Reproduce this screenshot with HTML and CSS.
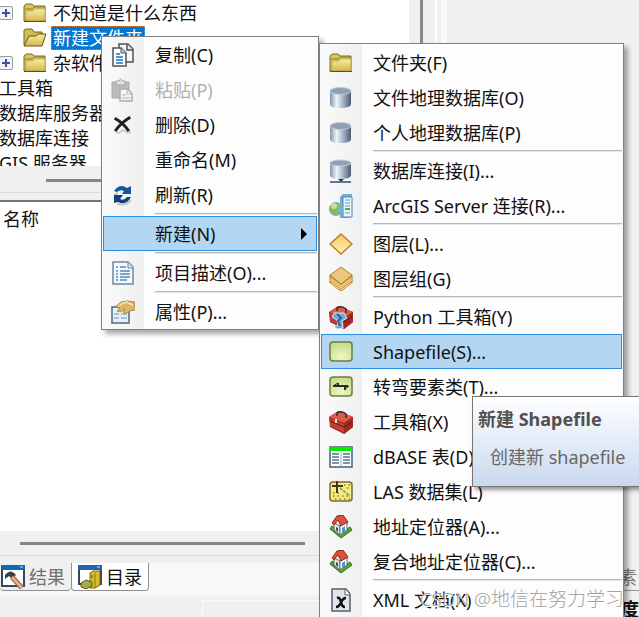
FILE: index.html
```html
<!DOCTYPE html>
<html lang="zh-CN">
<head>
    <meta charset="UTF-8">
    <meta name="viewport" content="width=device-width, initial-scale=1.0">
    <title>目录</title>
    <link rel="stylesheet" href="styles.css">
</head>
<body>
    <!-- 图标定义 -->
    <svg class="defs" width="0" height="0">
        <defs>
            <linearGradient id="g-yellow" x1="0" y1="0" x2="0" y2="1"><stop offset="0" stop-color="#f6eea0"/><stop offset="1" stop-color="#d3b84e"/></linearGradient>
            <linearGradient id="g-steel"><stop offset="0" stop-color="#8295ab"/><stop offset=".32" stop-color="#f0f5fb"/><stop offset=".6" stop-color="#a9bad0"/><stop offset="1" stop-color="#4d5c70"/></linearGradient>
            <linearGradient id="g-gold" x1="0" y1="0" x2="0" y2="1"><stop offset="0" stop-color="#f6c765"/><stop offset="1" stop-color="#fff3b0"/></linearGradient>
            <radialGradient id="g-green" cx=".5" cy=".8" r=".8"><stop offset="0" stop-color="#eef8c4"/><stop offset="1" stop-color="#c6d98a"/></radialGradient>
            <symbol id="folder" viewBox="0 0 24 24">
                <path d="M1 20V5l2-2h6l2 2h11v15z" fill="#d9c65c" stroke="#7c6a24"/>
                <path d="M2 8h7l2-2h11" fill="none" stroke="#8d7b30"/>
                <path d="M3 10h7l2-2h10v12H3z" fill="url(#g-yellow)" stroke="#a28f3c" stroke-width=".5"/>
                <path d="M1 20.500h22" stroke="#5d4f18"/>
            </symbol>
            <symbol id="folder-open" viewBox="0 0 24 24">
                <path d="M1 19V4l2-1h6l2 3h8v4" fill="#d2bc55" stroke="#75641e"/>
                <path d="M1 20L6 10h7l2-2h8l-4 12z" fill="url(#g-yellow)" stroke="#64551a"/>
            </symbol>
            <symbol id="copy" viewBox="0 0 24 24">
                <path d="M8 1h9l5 5v13H8z" fill="#f4f6f8" stroke="#4e545b" stroke-width="1.500"/>
                <path d="M16 1v6h6" fill="#dfe4e9" stroke="#4e545b" stroke-width="1.500"/>
                <path d="M2 5h8l5 5v13H2z" fill="#fff" stroke="#4e545b" stroke-width="1.500"/>
                <path d="M10 5v5h5" fill="#c4cbd2" stroke="#4e545b"/>
                <path d="M5 11h4M5 14h7M5 17h7M5 20h7" stroke="#4f97d2" stroke-width="2"/>
            </symbol>
            <symbol id="paste" viewBox="0 0 24 24">
                <path d="M1 4h17v16H1z" fill="#bcbcbc" stroke="#a9a9a9"/>
                <path d="M5 7V3h3q1.500-4 3 0h3v4z" fill="#e2e2e2" stroke="#a5a5a5"/>
                <path d="M9 11h8l4 5v7H9z" fill="#f5f5f5" stroke="#acacac" stroke-width="1.500"/>
                <path d="M16 11v5h5M11 17h4M11 20h8" fill="none" stroke="#b2b2b2"/>
            </symbol>
            <symbol id="delete" viewBox="0 0 24 24">
                <path d="M5 19l3 1 4-3 5 3 3-1" stroke="#ccc" stroke-width="2" fill="none"/>
                <path d="M5 6q7 4 12 11M18 5Q10 10 5 17" stroke="#202020" stroke-width="3" stroke-linecap="square" fill="none"/>
            </symbol>
            <symbol id="refresh" viewBox="0 0 24 24">
                <path d="M6 21q9 2 14-4M3 12l4-2" stroke="#c9c9c9" stroke-width="2" fill="none"/>
                <path d="M3 8q6-8 13-3l4-2v8h-9l2-3q-4-2-7 1z" fill="#15589a"/>
                <path d="M20 14q-5 9-13 5l-4 1v-8h9l-3 4q4 2 7-2z" fill="#10427a"/>
            </symbol>
            <symbol id="doc" viewBox="0 0 24 24">
                <path d="M2 1h15l5 5v17H2z" fill="#f5f9fd" stroke="#71879b" stroke-width="1.500"/>
                <path d="M17 1v6h5" fill="#dce5ee" stroke="#71879b"/>
                <path d="M5 6h2M9 6h6M5 10h2M9 10h10M5 13h2M9 13h10M5 16h2M9 16h10M5 19h2M9 19h7" stroke="#4f8dbc" stroke-width="1.500"/>
            </symbol>
            <symbol id="props" viewBox="0 0 24 24">
                <path d="M1 7h17v16H1z" fill="#e7f0f8" stroke="#51687d" stroke-width="1.500"/>
                <path d="M3 14h5M3 18h5M10 14h6M10 18h6" stroke="#a5c5dd" stroke-width="2"/>
                <path d="M4 7l6-5 6-1 8 1v8l-5 1-5 3-2-2 2-3-5 3-3-1 3-3z" fill="#dcb667" stroke="#91712e" stroke-width=".7"/>
                <path d="M8 6l4-3 5-1M17 3l5 2" stroke="#f9e6a8" stroke-width="1.500" fill="none"/>
            </symbol>
            <symbol id="db" viewBox="0 0 24 24">
                <path d="M1 5v13q0 4 10.500 4T22 18V5z" fill="url(#g-steel)"/>
                <ellipse cx="11.500" cy="5" rx="10.500" ry="3.500" fill="#8fa0b4" stroke="#c0cad6"/>
            </symbol>
            <symbol id="db-link" viewBox="0 0 24 24">
                <path d="M1 4v12q0 4 10.500 4T22 16V4z" fill="url(#g-steel)"/>
                <ellipse cx="11.500" cy="4" rx="10.500" ry="3" fill="#8fa0b4" stroke="#c0cad6"/>
                <path d="M1 23h21" stroke="#5d7898" stroke-width="2"/><path d="M9 20h6l-3 3z" fill="#263c59"/>
            </symbol>
            <symbol id="server" viewBox="0 0 24 24">
                <path d="M11 3l3-3h9v21l-3 3h-9z" fill="#75acd6"/>
                <path d="M14 3h9v20h-9z" fill="#edf6fd" stroke="#4c83b2"/>
                <path d="M16 6h5M16 9h5M16 12h5M16 19h5" stroke="#6599c1"/><path d="M16 15h5" stroke="#38b54a" stroke-width="2"/>
                <circle cx="7" cy="15" r="7" fill="#72b2d3"/>
                <path d="M1 12q4-5 8-3l3 4-4 2 2 4-4 3q-4-2-6-7z" fill="#8db75b"/><circle cx="5" cy="12" r="3" fill="#e1efb4" opacity=".7"/>
            </symbol>
            <symbol id="layer" viewBox="0 0 24 24">
                <path d="M12 2l11 10-11 10L1 12z" fill="url(#g-gold)" stroke="#b98028" stroke-width="1.500"/>
            </symbol>
            <symbol id="layers" viewBox="0 0 24 24">
                <path d="M1 8v8l11 8 11-8V8z" fill="#cf9a3c" stroke="#9a6a1e"/>
                <path d="M1 11l11 8 11-8M1 13l11 8 11-8M1 16l11 7 11-7" fill="none" stroke="#ffe69a"/>
                <path d="M12 0l11 8-11 9L1 8z" fill="#edc77e" stroke="#b4813a"/>
            </symbol>
            <symbol id="toolbox" viewBox="0 0 24 24">
                <path d="M0 7L10 1l14 6v10l-9 7L1 17z" fill="#8e201b"/>
                <path d="M0 7l9-6 15 6-9 6z" fill="#dd5b4a"/>
                <path d="M1 8l14 6v9L1 16z" fill="#c83d31"/><path d="M15 13l9-6v10l-9 7z" fill="#9f2923"/>
                <path d="M8 6V3q5-3 9 1v4" fill="none" stroke="#35302f" stroke-width="1.500"/>
                <path d="M1 11l14 6 8-5" fill="none" stroke="#6e1713"/><path d="M7 9v4" stroke="#f0dedb" stroke-width="2"/>
            </symbol>
            <symbol id="pybox" viewBox="0 0 24 24">
                <use href="#toolbox"/>
                <path d="M5 8h10l3 5-5 3 1 7-6 1-3-3 4-1-1-5-5-3z" fill="#6fa9d6" stroke="#d2e8f8"/>
                <path d="M8 9l4 4-3 3 2 5" fill="none" stroke="#28639c" stroke-width="2"/>
            </symbol>
            <symbol id="shape" viewBox="0 0 24 24">
                <rect x="1" y="2" width="22" height="19" rx="3" fill="url(#g-green)" stroke="#6d7d3a" stroke-width="1.500"/>
            </symbol>
            <symbol id="turn" viewBox="0 0 24 24">
                <use href="#shape"/>
                <path d="M4 11h15M9 8v3M16 11v4" stroke="#27301a" stroke-width="2"/><path d="M4 11l5-3M20 11l-4 3" stroke="#27301a"/>
            </symbol>
            <symbol id="dbase" viewBox="0 0 24 24">
                <path d="M1 2h22v20H1z" fill="#fff" stroke="#48617b" stroke-width="1.500"/>
                <path d="M1 2h22v4H1z" fill="#00ef00"/>
                <path d="M12 7v14" stroke="#9ab0c4"/>
                <path d="M3 9h7M3 12h7M3 15h7M3 18h7M14 9h7M14 12h7M14 15h7M14 18h7" stroke="#56758f" stroke-width="1.500"/>
            </symbol>
            <symbol id="las" viewBox="0 0 24 24">
                <rect x="1" y="2" width="22" height="19" rx="3" fill="#f7ea80" stroke="#7b6c2b" stroke-width="1.500"/>
                <path d="M4 13h9M4 16h17M6 19h15M15 5h6M18 8h3" stroke="#8a7d33" stroke-width="1.500" stroke-dasharray="1.500 3"/>
                <path d="M8 1v12M3 6h11" stroke="#3e3a26" stroke-width="2"/><path d="M11 8l10 8" stroke="#58978e" stroke-width="1.500" stroke-dasharray="3 1"/>
            </symbol>
            <symbol id="locator" viewBox="0 0 24 24">
                <path d="M1 14l11 9 11-8-2-3-9 6-9-7z" fill="#56a33a" stroke="#33721f"/>
                <path d="M5 8l6 3v9l-6-5z" fill="#e3e8ec" stroke="#5f6669"/><path d="M11 11l7-4v8l-7 5z" fill="#fff" stroke="#5f6669"/>
                <path d="M13 13l3-2v5l-3 2z" fill="#3b9ad6"/><path d="M7 12l2 1v4l-2-2z" fill="#3a454d"/>
                <path d="M3 8l5-7 6-1 5 7-7 4-3-6-4 5z" fill="#da5237" stroke="#8f2c18"/>
            </symbol>
            <symbol id="xml" viewBox="0 0 24 24">
                <path d="M3 1h14l4 5v17H3z" fill="#dfe5eb" stroke="#555f69" stroke-width="1.500"/>
                <path d="M16 1v6h5" fill="#fff" stroke="#555f69"/>
                <path d="M8 10q3-1 4 4t4 5M17 10q-3 0-5 4.500T7 19" fill="none" stroke="#111" stroke-width="2.500"/>
            </symbol>
            <symbol id="hammer" viewBox="0 0 24 24">
                <path d="M1 1h22v20H1z" fill="#fff" stroke="#33495f" stroke-width="2"/><path d="M0 0h24v5H0z" fill="#1267b8"/>
                <path d="M19 2h3" stroke="#c9e3f8"/>
                <path d="M4 10q5-6 9-2l2 2-4 4-3-3-4 3z" fill="#3b3f43"/><path d="M11 12l10 11" stroke="#8a5f42" stroke-width="5"/><path d="M11 12l10 11" stroke="#e2b189" stroke-width="3"/>
            </symbol>
            <symbol id="catalog" viewBox="0 0 24 24">
                <path d="M1 1h22v18H1z" fill="#fff" stroke="#33495f" stroke-width="2"/><path d="M0 0h24v5H0z" fill="#2263b4"/>
                <path d="M19 2h3" stroke="#c9e3f8"/>
                <path d="M12 8l3-2h7v14l-5 3h-5z" fill="#d9bd2c" stroke="#76650e"/><path d="M17 8v15" stroke="#8f7b13"/><path d="M14 10v3" stroke="#5a4c0c"/>
                <path d="M3 18l5-3 6 2v4l-6 3-5-2z" fill="#b4a62d" stroke="#676011"/><path d="M7 17l5 1-3 2-4-1z" fill="#59c3b2"/>
            </symbol>
        </defs>
    </svg>

    <div class="app">
        <section class="dock">
            <div class="tree-pane">
                <ul class="tree">
                    <li><button class="expander" aria-label="展开"></button><svg class="icon"><use href="#folder"/></svg><span class="node">不知道是什么东西</span></li>
                    <li><i class="no-expander"></i><svg class="icon"><use href="#folder-open"/></svg><span class="node selected">新建文件夹</span></li>
                    <li><button class="expander" aria-label="展开"></button><svg class="icon"><use href="#folder"/></svg><span class="node">杂软件</span></li>
                    <li>工具箱</li>
                    <li>数据库服务器</li>
                    <li>数据库连接</li>
                    <li>GIS 服务器</li>
                </ul>
                <div class="vscroll"></div>
            </div>
            <div class="hscroll tree-scroll"></div>
            <div class="list">名称</div>
            <div class="hscroll list-scroll"></div>
            <nav class="tabs">
                <button class="tab"><svg class="icon"><use href="#hammer"/></svg>结果</button>
                <button class="tab active"><svg class="icon"><use href="#catalog"/></svg>目录</button>
            </nav>
            <div class="status"><div class="status-cell"></div></div>
        </section>
        <div class="splitter"></div>
        <aside class="side">
            <div class="side-tab">素</div>
            <div class="side-status">1度</div>
        </aside>
    </div>

    <!-- 右键菜单 -->
    <div class="menu context-menu">
        <button class="item"><svg class="icon"><use href="#copy"/></svg>复制(C)</button>
        <button class="item" disabled><svg class="icon"><use href="#paste"/></svg>粘贴(P)</button>
        <button class="item"><svg class="icon"><use href="#delete"/></svg>删除(D)</button>
        <button class="item"><svg class="icon"></svg>重命名(M)</button>
        <button class="item"><svg class="icon"><use href="#refresh"/></svg>刷新(R)</button>
        <hr>
        <button class="item current"><svg class="icon"></svg>新建(N)<i class="arrow"></i></button>
        <hr>
        <button class="item"><svg class="icon"><use href="#doc"/></svg>项目描述(O)...</button>
        <hr>
        <button class="item"><svg class="icon"><use href="#props"/></svg>属性(P)...</button>
    </div>

    <!-- 新建子菜单 -->
    <div class="menu sub-menu">
        <button class="item"><svg class="icon"><use href="#folder"/></svg>文件夹(F)</button>
        <button class="item"><svg class="icon"><use href="#db"/></svg>文件地理数据库(O)</button>
        <button class="item"><svg class="icon"><use href="#db"/></svg>个人地理数据库(P)</button>
        <hr>
        <button class="item"><svg class="icon"><use href="#db-link"/></svg>数据库连接(I)...</button>
        <button class="item"><svg class="icon"><use href="#server"/></svg>ArcGIS Server 连接(R)...</button>
        <hr>
        <button class="item"><svg class="icon"><use href="#layer"/></svg>图层(L)...</button>
        <button class="item"><svg class="icon"><use href="#layers"/></svg>图层组(G)</button>
        <hr>
        <button class="item"><svg class="icon"><use href="#pybox"/></svg>Python 工具箱(Y)</button>
        <button class="item current"><svg class="icon"><use href="#shape"/></svg>Shapefile(S)...</button>
        <button class="item"><svg class="icon"><use href="#turn"/></svg>转弯要素类(T)...</button>
        <button class="item"><svg class="icon"><use href="#toolbox"/></svg>工具箱(X)</button>
        <button class="item"><svg class="icon"><use href="#dbase"/></svg>dBASE 表(D)</button>
        <button class="item"><svg class="icon"><use href="#las"/></svg>LAS 数据集(L)</button>
        <button class="item"><svg class="icon"><use href="#locator"/></svg>地址定位器(A)...</button>
        <button class="item"><svg class="icon"><use href="#locator"/></svg>复合地址定位器(C)...</button>
        <hr>
        <button class="item"><svg class="icon"><use href="#xml"/></svg>XML 文档(X)</button>
    </div>

    <div class="tooltip" role="tooltip">
        <strong>新建 Shapefile</strong>
        <p>创建新 shapefile</p>
    </div>

    <div class="watermark">CSDN @地信在努力学习</div>
</body>
</html>
```

FILE: styles.css
```css
* {
    box-sizing: border-box;
}

body {
    margin: 0;
    height: 100vh;
    overflow: hidden;
    position: relative;
    background: #f0f0f0;
    color: #111;
    font-family: "Noto Sans", "Noto Sans CJK SC", sans-serif;
    font-size: 18px;
    line-height: 24px;
}

button {
    font: inherit;
    color: inherit;
    text-align: left;
}

.defs {
    position: absolute;
}

.icon {
    width: 24px;
    height: 24px;
    flex: none;
}

.app {
    display: flex;
    height: 100%;
}

/* 左侧目录面板 */
.dock {
    flex: 1;
    display: flex;
    flex-direction: column;
    min-width: 0;
}

.tree-pane {
    display: flex;
    height: 168px;
}

.tree {
    flex: 1;
    height: 166px;
    margin: 0;
    padding: 0;
    overflow: hidden;
    list-style: none;
    background: #fff;
}

.tree li {
    display: flex;
    align-items: center;
    height: 25px;
    margin-left: -1px;
    white-space: nowrap;
}

.tree .icon {
    margin: 0 4px 0 10px;
}

.expander,
.no-expander {
    width: 14px;
    height: 14px;
    flex: none;
}

.expander {
    padding: 0;
    border: 1px solid #999;
    border-radius: 2px;
    background:
        linear-gradient(#39549a, #39549a) center / 8px 2px no-repeat,
        linear-gradient(#39549a, #39549a) center / 2px 8px no-repeat,
        #f4f4f4;
}

.node {
    padding: 0 2px;
}

.selected {
    background: #0078d7;
    color: #fff;
    outline: 1px dotted #d98a3a;
    outline-offset: -1px;
}

.vscroll {
    width: 26px;
    border-right: 12px solid #f0f0f0;
    border-left: 11px solid #f0f0f0;
    background: #888;
}

.hscroll {
    background: linear-gradient(#858585, #858585) center / 100% 3px no-repeat content-box #f0f0f0;
}

.tree-scroll {
    height: 25px;
    padding: 0 40px 0 46px;
    border-bottom: 1px solid #dcdcdc;
}

.list {
    flex: 1;
    margin-top: 7px;
    padding: 5px 3px;
    border-top: 2px solid #777;
    background: #fff;
}

.list-scroll {
    height: 25px;
    padding: 0 130px 0 20px;
    border-bottom: 1px solid #dcdcdc;
}

.tabs {
    display: flex;
    height: 39px;
    padding-bottom: 4px;
    border-top: 7px solid #f0f0f0;
    background: #f8f8f8;
}

.tab {
    display: flex;
    align-items: center;
    gap: 4px;
    height: 28px;
    padding: 0 6px 0 1px;
    border: 0 solid #909090;
    border-width: 0 0 1px;
    border-radius: 0 0 4px 4px;
    background: #f0f0f0;
    color: #707070;
}

.tab.active {
    padding: 0 6px;
    border-width: 0 1px 1px;
    background: #fff;
    color: #111;
}

.status {
    height: 22px;
    padding: 4px 0 0 202px;
    border-top: 1px solid #f4f4f4;
}

.status-cell {
    height: 100%;
    border-left: 1px solid #fafafa;
    border-top: 1px solid #fafafa;
}

.splitter {
    width: 12px;
    border-left: 2px solid #fcfcfc;
    border-right: 6px solid #fafafa;
}

/* 右侧面板 */
.side {
    width: 192px;
    display: flex;
    flex-direction: column;
    align-items: flex-end;
    justify-content: flex-end;
}

.side-tab,
.side-status {
    width: 20px;
    height: 26px;
    border-bottom: 1px solid #999;
    color: #777;
    overflow: hidden;
}

.side-status {
    display: flex;
    justify-content: flex-end;
    border: 0;
    padding-top: 6px;
    color: #111;
    font-weight: bold;
    white-space: nowrap;
}

/* 菜单 */
.menu {
    position: absolute;
    display: flex;
    flex-direction: column;
    padding: 0 1px;
    border: 1px solid #808080;
    background: linear-gradient(to right, #fbfbfb, #efefef 42px, #fdfdfd 42px);
    box-shadow: 4px 4px 5px rgba(0, 0, 0, 0.35);
}

.context-menu {
    left: 101px;
    top: 36px;
    width: 218px;
}

.sub-menu {
    left: 319px;
    top: 43px;
    width: 305px;
    padding-top: 1px;
}

.item {
    display: flex;
    align-items: center;
    gap: 20px;
    height: 35px;
    padding: 0 9px 0 7px;
    border: 1px solid transparent;
    background: none;
    white-space: nowrap;
}

.item:disabled {
    color: #b0b0b0;
}

.item.current {
    border-color: #2b90e2;
    background: #b3d6f2;
}

.menu hr {
    width: calc(100% - 52px);
    height: 2px;
    margin: 0 0 1px 52px;
    border: 0;
    border-top: 1px solid #b8b8b8;
    background: #e6e6e6;
}

.context-menu hr {
    margin-top: 1px;
}

.arrow {
    margin-left: auto;
    border: 6px solid transparent;
    border-left-color: #000;
    border-right-width: 0;
}

/* 提示框 */
.tooltip {
    position: absolute;
    left: 472px;
    top: 396px;
    width: 176px;
    height: 91px;
    padding: 10px 5px;
    border: 1px solid #767676;
    background: linear-gradient(#fff, #c9d8ee);
    box-shadow: 3px 3px 4px rgba(0, 0, 0, 0.4);
    color: #505050;
    white-space: nowrap;
}

.tooltip strong {
    display: block;
}

.tooltip p {
    margin: 14px 0 0 12px;
    color: #666;
}

.watermark {
    position: absolute;
    right: 15px;
    bottom: 6px;
    color: #a4a4a4;
    font-size: 19px;
    font-weight: 300;
    text-shadow: 1px 1px 0 #fff;
    white-space: nowrap;
    pointer-events: none;
}
```
